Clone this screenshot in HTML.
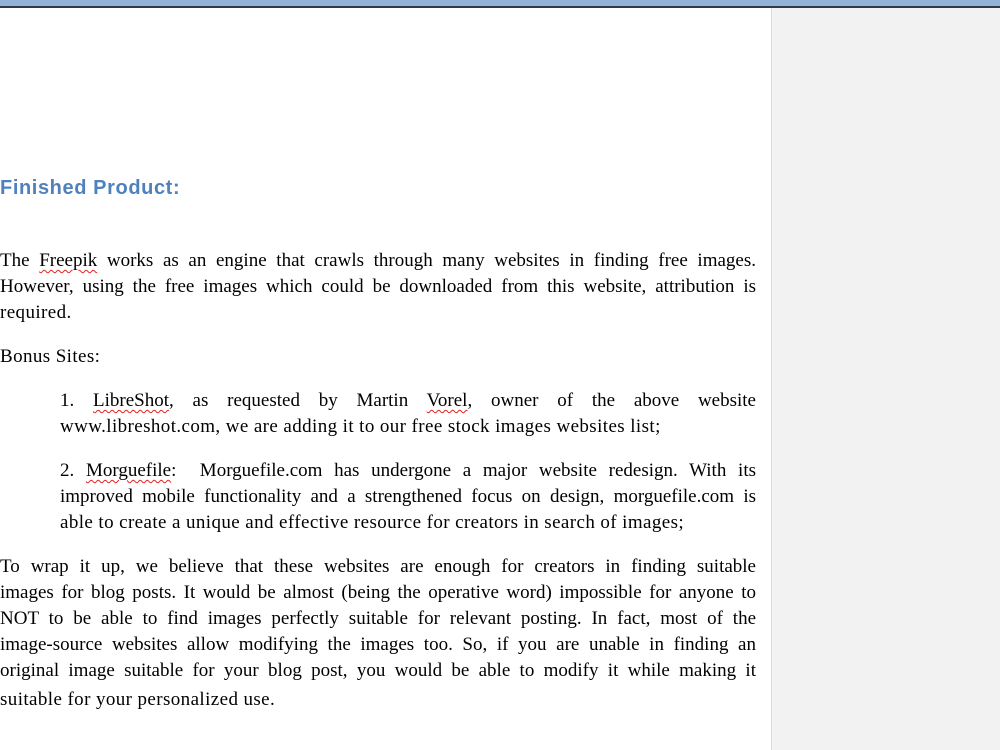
<!DOCTYPE html>
<html><head><style>
body{margin:0;width:1000px;height:750px;overflow:hidden;background:#fff;position:relative;font-family:"Liberation Serif",serif;color:#000}
.top{position:absolute;left:0;top:0;width:1000px;height:6px;background:#93b2d8}
.dk{position:absolute;left:0;top:6px;width:1000px;height:2px;background:#2f3848}
.side{position:absolute;left:771px;top:8px;width:229px;height:742px;background:#f2f2f2;border-left:1px solid #dcdcdc}
h1{position:absolute;left:0;top:177px;margin:0;font:bold 20px "Liberation Sans",sans-serif;letter-spacing:0.6px;color:#4f81bd}
.l{position:absolute;font-size:19px;letter-spacing:0.4px;line-height:26px;white-space:nowrap}
.j{text-align:justify;text-align-last:justify;letter-spacing:0}
.sp{text-decoration:underline wavy #e02020;text-decoration-thickness:1px;text-underline-offset:3px}
</style></head><body>
<div class="top"></div><div class="dk"></div><div class="side"></div>
<h1>Finished Product:</h1>
<div class="l j" style="left:0;top:248px;width:756px">The <span class="sp">Freepik</span> works as an engine that crawls through many websites in finding free images.</div>
<div class="l j" style="left:0;top:274px;width:756px">However, using the free images which could be downloaded from this website, attribution is</div>
<div class="l" style="left:0;top:300px">required.</div>
<div class="l" style="left:0;top:344px">Bonus Sites:</div>
<div class="l j" style="left:60px;top:388px;width:696px">1. <span class="sp">LibreShot</span>, as requested by Martin <span class="sp">Vorel</span>, owner of the above website</div>
<div class="l" style="left:60px;top:414px">www.libreshot.com, we are adding it to our free stock images websites list;</div>
<div class="l j" style="left:60px;top:458px;width:696px">2. <span class="sp">Morguefile</span>:&nbsp; Morguefile.com has undergone a major website redesign. With its</div>
<div class="l j" style="left:60px;top:484px;width:696px">improved mobile functionality and a strengthened focus on design, morguefile.com is</div>
<div class="l" style="left:60px;top:510px">able to create a unique and effective resource for creators in search of images;</div>
<div class="l j" style="left:0;top:554px;width:756px">To wrap it up, we believe that these websites are enough for creators in finding suitable</div>
<div class="l j" style="left:0;top:580px;width:756px">images for blog posts. It would be almost (being the operative word) impossible for anyone to</div>
<div class="l j" style="left:0;top:606px;width:756px">NOT to be able to find images perfectly suitable for relevant posting. In fact, most of the</div>
<div class="l j" style="left:0;top:632px;width:756px">image-source websites allow modifying the images too. So, if you are unable in finding an</div>
<div class="l j" style="left:0;top:658px;width:756px">original image suitable for your blog post, you would be able to modify it while making it</div>
<div class="l" style="left:0;top:687px">suitable for your personalized use.</div>
</body></html>
